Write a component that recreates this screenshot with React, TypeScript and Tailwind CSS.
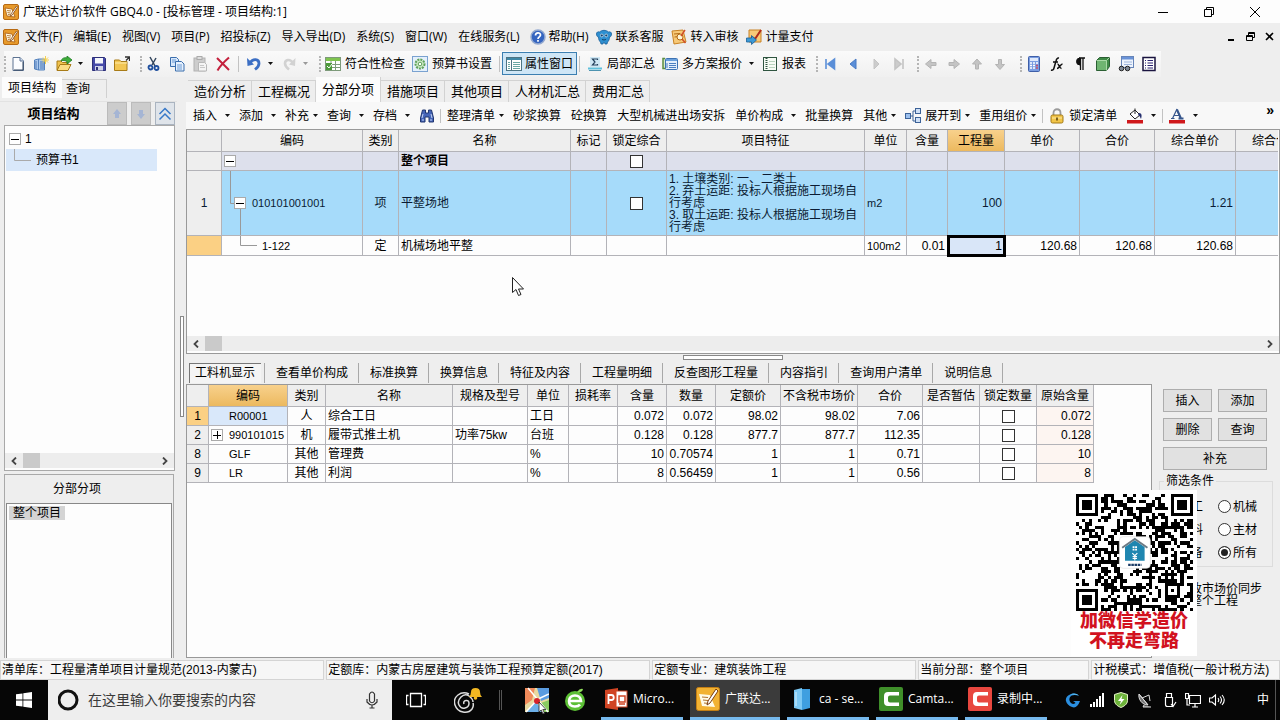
import type { ReactNode } from 'react';
import clsx from 'clsx';

const ICONS: Record<string, ReactNode> = {
  app: (
    <>
      <rect x="0.5" y="0.5" width="15" height="15" rx="1.5" fill="#e79a2b" stroke="#b86a12" />
      <path d="M2 4l7 1 3 8-8-1z" fill="#fff7e0" stroke="#a85b10" strokeWidth="0.8" />
      <path d="M4 6.5l4 .5M4.5 8.5l3 .5M5 10.5l3 .5" stroke="#b0722a" strokeWidth="0.9" />
      <path d="M13.5 2L8 10l-.6 2.2L9.200 11 14.500 3z" fill="#fff" stroke="#8a4a12" strokeWidth="0.8" />
    </>
  ),
  file: (
    <>
      <path d="M3 1.500h7l3.500 3.500v9.500H3z" fill="#fcfdff" stroke="#5d7392" />
      <path d="M10 1.500V5h3.500" fill="#cfdcf0" stroke="#5d7392" />
      <path d="M13 6v8H4" stroke="#34475f" fill="none" />
    </>
  ),
  files: (
    <>
      <path d="M1.500 4l4-1v11l-4-1zM5.500 3h6v11h-6z" fill="#a9c8ee" stroke="#5582bd" />
      <path d="M7 6h4M7 8h4M7 10h4M7 12h4M3 5v8" stroke="#4e79b5" />
      <path d="M12.500 0v8M8.500 4h8M10 1.500l5 5M15 1.500l-5 5" stroke="#f5d04c" />
    </>
  ),
  open: (
    <>
      <path d="M1 14V5h4l1.500 1.500H12V9" fill="#f0c24d" stroke="#a87b17" />
      <path d="M1 14.500l3-6h11l-3 6z" fill="#fbdd83" stroke="#a87b17" />
      <path d="M5 5c1-3 4-4 6-3V0l5 4-5 4V5.500C9 4.500 7 4 5 5z" fill="#3fae3a" stroke="#1c7a22" strokeWidth="0.8" />
    </>
  ),
  save: (
    <>
      <path d="M1.500 1.500h12l1 1v12h-13z" fill="#4549a8" stroke="#2c2f78" />
      <rect x="4" y="2" width="8" height="5.500" fill="#f4f6fb" />
      <rect x="4" y="10" width="8" height="4.500" fill="#cfd3e8" />
      <rect x="5" y="11" width="2" height="3" fill="#2c2f78" />
    </>
  ),
  folder: (
    <>
      <path d="M0.500 14.500V4h5l1.500 1.500h6v9z" fill="#f2c653" stroke="#a87b17" />
      <path d="M1 7h12" stroke="#fdecb0" />
      <path d="M11 1h4.500v4M15 1.500l-3 3" stroke="#333" fill="none" strokeWidth="1.300" />
    </>
  ),
  cut: (
    <>
      <path d="M4 1l5 9M10 2L6 9" stroke="#33465e" strokeWidth="1.500" />
      <circle cx="4.500" cy="11.500" r="2" fill="none" stroke="#1f4f9e" strokeWidth="1.800" />
      <circle cx="10.500" cy="12" r="2" fill="none" stroke="#1f4f9e" strokeWidth="1.800" />
    </>
  ),
  copy: (
    <>
      <path d="M1.500 1.500h6l2 2v7h-8z" fill="#d8e8fb" stroke="#3a6ead" />
      <path d="M6.500 5.500h6l2.500 2.500v7H6.500z" fill="#e7f1fd" stroke="#3a6ead" />
      <path d="M8 9h5M8 11h5M8 13h5M3 4h4M3 6h3" stroke="#6c9bd4" />
    </>
  ),
  paste: (
    <>
      <rect x="2" y="2" width="11" height="13" fill="#cdcdcd" stroke="#b2b2b2" />
      <rect x="5" y="0.500" width="5" height="3" fill="#ddd" stroke="#aaa" />
      <path d="M6.500 6.500h6l2 2v6.500h-8z" fill="#f4f4f4" stroke="#b8b8b8" />
      <path d="M8 9.500h4M8 11.500h5" stroke="#c8c8c8" />
    </>
  ),
  del: <path d="M2 2c3 3 8 8 12 12M14 1.500C10 5 5 10 2.500 14.500" stroke="#c4203c" strokeWidth="2" fill="none" />,
  undo: (
    <>
      <path d="M4 7c3-5 9-4 9 .5 0 3-2 4.500-4 6" fill="none" stroke="#3c6fc4" strokeWidth="2.800" />
      <path d="M1 2l.5 8L8 8.500z" fill="#3c6fc4" />
    </>
  ),
  redo: (
    <>
      <path d="M12 7C9 2.500 4 3.500 4 7.500c0 3 2 4.500 4 6" fill="none" stroke="#d2d2d2" strokeWidth="2.600" />
      <path d="M14.500 2L14 10 8 8.500z" fill="#d2d2d2" />
    </>
  ),
  check: (
    <>
      <rect x="0.500" y="1.500" width="15" height="13" fill="#fff" stroke="#7d9a7a" />
      <rect x="1" y="2" width="14" height="3" fill="#7fc44f" />
      <path d="M1 8.500h14M1 11.500h14M6 5v10M10.500 5v10" stroke="#7d9a7a" />
      <rect x="1" y="7" width="6" height="7" fill="#4d9a3a" />
      <path d="M2 10l2 2 3-4" stroke="#fff" fill="none" />
    </>
  ),
  gear: (
    <>
      <rect x="0.500" y="0.500" width="15" height="15" fill="#e4f0fb" stroke="#7aa2d0" />
      <circle cx="8" cy="8" r="4.500" fill="#cfe8c8" stroke="#5ea25a" strokeWidth="2" strokeDasharray="2 1" />
      <circle cx="8" cy="8" r="1.800" fill="#fff" stroke="#5ea25a" />
    </>
  ),
  props: (
    <>
      <rect x="0.500" y="1.500" width="15" height="13" fill="#fff" stroke="#4d7484" />
      <rect x="1" y="2" width="14" height="2" fill="#3f87a6" />
      <path d="M5.500 4v10" stroke="#4d7484" />
      <path d="M2 6.500h2M2 8.500h2M2 10.500h2M2 12.500h2M7 6.500h7M7 8.500h7M7 10.500h7M7 12.500h7" stroke="#69a7a4" />
    </>
  ),
  sum: (
    <>
      <rect x="3" y="1" width="10" height="10" fill="#cfe7f4" />
      <path d="M10.500 4V3H5.500L8 6 5.500 9h5V8" fill="none" stroke="#23405c" strokeWidth="1.200" />
      <path d="M1 12.500h14" stroke="#5fc0dc" strokeWidth="2" />
      <path d="M2 14.500h12" stroke="#4d93b0" />
    </>
  ),
  plans: (
    <>
      <path d="M3 2.500h-2v10h3" fill="#d8ebc9" stroke="#5b8c40" strokeWidth="1.500" />
      <rect x="3.500" y="2.500" width="12" height="11" rx="1" fill="#e3eefb" stroke="#3c72b3" />
      <rect x="4" y="3" width="11" height="2" fill="#69a0dc" />
      <path d="M7 7.500h7M7 9.500h7M7 11.500h7M5 7v5" stroke="#4b7fc0" />
    </>
  ),
  report: (
    <>
      <rect x="1.500" y="1.500" width="13" height="13" fill="#f6fbf4" stroke="#2f5540" />
      <path d="M4.500 2v12" stroke="#2f5540" strokeDasharray="1 1" strokeWidth="2" />
      <path d="M7 5.500h6M7 8.500h6M7 11.500h6" stroke="#b9d3bd" />
    </>
  ),
  first: <path d="M4 3v10M12.500 3v10L6 8z" fill="#5b8fd8" stroke="#5b8fd8" strokeWidth="1.600" />,
  prev: <path d="M11 3v10L5 8z" fill="#5b8fd8" stroke="#4a7bc4" />,
  next: <path d="M6 3v10l5-5z" fill="#cccccc" stroke="#c4c4c4" />,
  last: <path d="M12 3v10M4 3v10l6-5z" fill="#cccccc" stroke="#c4c4c4" strokeWidth="1.600" />,
  left: <path d="M2.500 8L8 3.500V6.500h5v3H8v3z" fill="#c4c4c4" stroke="#b4b4b4" />,
  right: <path d="M13.500 8L8 3.500V6.500H3v3h5v3z" fill="#c4c4c4" stroke="#b4b4b4" />,
  up: <path d="M8 3l4.500 5H9.500v5h-3V8h-3z" fill="#c4c4c4" stroke="#b4b4b4" />,
  down: <path d="M8 13.500L3.500 8.500h3v-5h3v5h3z" fill="#c4c4c4" stroke="#b4b4b4" />,
  calc: (
    <>
      <rect x="2.500" y="0.500" width="11" height="15" rx="1" fill="#7a9de0" stroke="#3f5fa8" />
      <rect x="4" y="2" width="8" height="3" fill="#dfe9fb" />
      <path d="M4 7h2M7 7h2M10 7h2M4 9.500h2M7 9.500h2M4 12h2M7 12h2" stroke="#fff" strokeWidth="1.400" />
      <path d="M10 9.500h2M10 12h2" stroke="#c8506a" strokeWidth="1.400" />
    </>
  ),
  fx: (
    <path
      d="M10 2c-2-.5-2.500 1-3 3L5 12c-.5 2-1.500 2.500-3 2M4 6h5M8.500 8c2 0 1.500 4.500 4 4.500M13.500 8c-2 0-3.500 4.500-5.500 4.500"
      fill="none"
      stroke="#111"
      strokeWidth="1.500"
    />
  ),
  para: (
    <>
      <path d="M8 2a3.500 3.500 0 000 7z" fill="#111" stroke="#111" />
      <path d="M8.500 2v12M11 2v12M7 2h6" stroke="#111" strokeWidth="1.300" />
    </>
  ),
  cube: (
    <>
      <path d="M1.500 4.500l3-3h10v9l-3 4h-10z" fill="#3f8a46" stroke="#2b5f33" />
      <rect x="2" y="5" width="9" height="9" fill="#6fb571" />
      <path d="M1.500 4.500h10l3-3M11.500 4.500v10" stroke="#a8d9a6" fill="none" />
    </>
  ),
  find: (
    <>
      <rect x="3.500" y="0.500" width="12" height="11" fill="#eef4fd" stroke="#6785b8" />
      <rect x="4" y="1" width="11" height="2.500" fill="#6a93d8" />
      <path d="M6 6h8M6 8.500h8" stroke="#9fb6dc" />
      <circle cx="3.500" cy="12.500" r="2.300" fill="#7d8795" stroke="#222" />
      <circle cx="9.500" cy="12.500" r="2.300" fill="#7d8795" stroke="#222" />
    </>
  ),
  list: (
    <>
      <rect x="2" y="1.500" width="12" height="13" fill="#fff" stroke="#1a1440" strokeWidth="1.500" />
      <path d="M4 4.500h1M4 7h1M4 9.500h1M4 12h1M6.500 4.500H12M6.500 7H12M6.500 9.500H12M6.500 12H12" stroke="#2a2270" strokeWidth="1.200" />
    </>
  ),
  help: (
    <>
      <circle cx="8" cy="8" r="7" fill="#3565c0" stroke="#94a9cf" strokeWidth="1.500" />
      <path d="M5.500 6.500c0-3.500 5-3.500 5-.5 0 2-2.500 1.800-2.500 4M8 11v1.800" stroke="#fff" strokeWidth="1.700" fill="none" />
    </>
  ),
  service: (
    <>
      <path
        d="M0.500 5c0-2 1.500-2.500 3-2C6 .800 10 .800 12.500 3c1.500-.5 3 0 3 2s-1 3-2 3c0 2.500-.8 4-2 5l-.5 2h-2l-.5-1.500h-1L7 15H5l-.5-2c-1.200-1-2-2.500-2-5-1 0-2-1-2-3z"
        fill="#2e8fd0"
        stroke="#1a5f9c"
        strokeWidth="0.800"
      />
      <circle cx="5.800" cy="6.500" r="1.400" fill="#0f3f6c" stroke="#fff" strokeWidth="0.600" />
      <circle cx="10.200" cy="6.500" r="1.400" fill="#0f3f6c" stroke="#fff" strokeWidth="0.600" />
      <path d="M6 10.500q2 1 4 0" stroke="#0f3f6c" />
    </>
  ),
  audit: (
    <>
      <path d="M1 2l11-1 3 12-12 2z" fill="#f7c978" stroke="#c98224" />
      <path d="M3 5l6-.5M3.500 8l3-.3" stroke="#b36a14" />
      <circle cx="9" cy="8" r="3" fill="#fff6d8" stroke="#b36a14" />
      <path d="M11 10l3.500 4M14 1l-4 6" stroke="#d0502a" strokeWidth="1.500" />
    </>
  ),
  pay: (
    <>
      <path d="M3 1h12v12H3z" fill="#f7c978" stroke="#c98224" />
      <path d="M5 8l4 2 6-9" stroke="#b02a1a" strokeWidth="2" fill="none" />
      <path d="M0.500 9h5V6.500l5 4.500-5 4.500V13h-5z" fill="#3d9ad6" stroke="#1b5f98" strokeWidth="0.800" />
    </>
  ),
  binoc: (
    <>
      <path d="M3.500 2h3v3h3V2h3l2 8v4h-4.500V9h-4v5H1.500v-4z" fill="#4565b8" stroke="#21366f" />
      <path d="M4 6l-1 4M12 6l1 4M3 12h2M11 12h2" stroke="#c4d4f6" />
    </>
  ),
  tree: (
    <>
      <path d="M4 8h4M8 3v10M8 3h3M8 13h3" stroke="#3c6298" fill="none" />
      <rect x="0.500" y="5.500" width="5" height="5" fill="#9cc0ee" stroke="#3c6298" />
      <rect x="10.500" y="0.500" width="5" height="5" fill="#cfe0f6" stroke="#3c6298" />
      <rect x="10.500" y="9.500" width="5" height="5" fill="#cfe0f6" stroke="#3c6298" />
    </>
  ),
  lock: (
    <>
      <path d="M4.500 8V5c0-5 7-5 7 0v3" fill="none" stroke="#9b9b9b" strokeWidth="1.800" />
      <rect x="2" y="7" width="12" height="8" rx="1.500" fill="#f2c548" stroke="#a37a18" />
      <path d="M3 10h10" stroke="#fce9a4" />
      <path d="M8 9.500v3" stroke="#5f4508" strokeWidth="1.600" />
    </>
  ),
  fill: (
    <>
      <path d="M3 6l5-4 5 5-5 4z" fill="#fff" stroke="#222" />
      <path d="M8 6V0.500" stroke="#222" />
      <path d="M12 5c3 0 3 3 2 6-1-2-1-3-3-4z" fill="#27306f" />
      <rect x="0" y="12" width="16" height="3.500" fill="#d0181c" />
    </>
  ),
  fontColor: (
    <>
      <path d="M3.500 10.500L8 1M7.500 1l4 9.500M5.500 7.500h5M2 10.500h3.500" stroke="#36568c" strokeWidth="1.200" fill="none" />
      <path d="M8 1.500l4 9M9.500 10.500h5" stroke="#36568c" strokeWidth="2" fill="none" />
      <rect x="0" y="12" width="16" height="3.500" fill="#d0181c" />
    </>
  ),
};

function Icon({ name, size = 'size-4' }: { name: string; size?: string }) {
  return (
    <svg viewBox="0 0 16 16" className={clsx(size, 'shrink-0')} fill="none">
      {ICONS[name]}
    </svg>
  );
}

function Caret({ gray = false }: { gray?: boolean }) {
  return (
    <svg viewBox="0 0 7 4" className="h-1 w-[7px] shrink-0">
      <path d="M1 0h5L3.500 3z" fill={gray ? '#999' : '#111'} />
    </svg>
  );
}

const Grip = () => <span className="-mr-[3px] h-4 w-0 shrink-0 border-l-2 border-dotted border-[#b5b5b5]" />;
const Divider = () => <span className="h-4 w-px shrink-0 bg-[#c2c2c2]" />;

function IconButton({ name, label, caret, gray }: { name: string; label: string; caret?: boolean; gray?: boolean }) {
  return (
    <button type="button" aria-label={label} className="flex shrink-0 items-center gap-[5px]">
      <Icon name={name} />
      {caret && <Caret gray={gray} />}
    </button>
  );
}

function TextButton({ icon, text, caret }: { icon: string; text: string; caret?: boolean }) {
  return (
    <button type="button" className="flex shrink-0 items-center gap-1 whitespace-nowrap">
      <Icon name={icon} />
      {text}
      {caret && (
        <span className="ml-0.5">
          <Caret />
        </span>
      )}
    </button>
  );
}

const MENUS = ['文件(F)', '编辑(E)', '视图(V)', '项目(P)', '招投标(Z)', '导入导出(D)', '系统(S)', '窗口(W)', '在线服务(L)'];

const MENU_LINKS = [
  { icon: 'help', text: '帮助(H)' },
  { icon: 'service', text: '联系客服' },
  { icon: 'audit', text: '转入审核' },
  { icon: 'pay', text: '计量支付' },
];

function TitleBar() {
  return (
    <header className="flex h-[23px] shrink-0 items-center bg-[#fdfdfd] pl-[3px] font-['Open_Sans','Noto_Sans_CJK_SC',sans-serif]">
      <Icon name="app" />
      <h1 className="ml-1 flex-1 text-xs whitespace-nowrap">广联达计价软件 GBQ4.0 - [投标管理 - 项目结构:1]</h1>
      <div className="flex items-center gap-9 pr-5">
        <button type="button" aria-label="最小化">
          <svg viewBox="0 0 10 10" className="size-2.5"><path d="M0 5.500h10" stroke="#000" /></svg>
        </button>
        <button type="button" aria-label="还原">
          <svg viewBox="0 0 10 10" className="size-2.5" fill="none" stroke="#000">
            <path d="M0.500 2.500h7v7h-7zM2.500 2.500v-2h7v7h-2" />
          </svg>
        </button>
        <button type="button" aria-label="关闭">
          <svg viewBox="0 0 10 10" className="size-2.5"><path d="M0 0l10 10M10 0L0 10" stroke="#000" /></svg>
        </button>
      </div>
    </header>
  );
}

function MenuBar() {
  return (
    <nav className="flex h-[27px] shrink-0 items-center pl-[3px] font-['Open_Sans','Noto_Sans_CJK_SC',sans-serif] text-xs whitespace-nowrap">
      <Icon name="app" />
      <div className="ml-1.5 flex items-center gap-[11px]">
        {MENUS.map((m) => (
          <button key={m} type="button">{m}</button>
        ))}
      </div>
      <div className="ml-2.5 flex flex-1 items-center gap-2">
        {MENU_LINKS.map((m) => (
          <button key={m.text} type="button" className="flex items-center gap-[3px]">
            <Icon name={m.icon} />
            {m.text}
          </button>
        ))}
      </div>
      <div className="flex items-center gap-2.5 pr-1.5">
        <button type="button" aria-label="最小化子窗口">
          <svg viewBox="0 0 9 9" className="size-[9px]"><path d="M1 8h6" stroke="#000" strokeWidth="2" /></svg>
        </button>
        <button type="button" aria-label="还原子窗口">
          <svg viewBox="0 0 9 9" className="size-[9px]" fill="none" stroke="#000">
            <path d="M0.500 3.500h6v5h-6zM0.500 4.500h6M2.500 3V.500h6v5h-2M2.500 1.500h6" />
          </svg>
        </button>
        <button type="button" aria-label="关闭子窗口">
          <svg viewBox="0 0 9 9" className="size-[9px]"><path d="M1 1l7 7M8 1L1 8" stroke="#000" strokeWidth="1.600" /></svg>
        </button>
      </div>
    </nav>
  );
}

function MainToolbar() {
  const group = 'flex h-[26px] shrink-0 items-center gap-[7px] bg-linear-to-b from-[#fafafa] to-[#f0f0f0]';
  return (
    <div className="flex h-[27px] shrink-0 items-center pl-1 text-xs">
      <div className={clsx(group, 'pr-2.5')}>
        <Grip />
        <IconButton name="file" label="新建" />
        <IconButton name="files" label="新建项目" />
        <IconButton name="open" label="打开" caret />
        <IconButton name="save" label="保存" />
        <IconButton name="folder" label="目录" />
      </div>
      <div className={clsx(group, 'pr-2.5')}>
        <Grip />
        <IconButton name="cut" label="剪切" />
        <IconButton name="copy" label="复制" />
        <IconButton name="paste" label="粘贴" />
        <IconButton name="del" label="删除" />
        <Divider />
        <IconButton name="undo" label="撤消" caret />
        <IconButton name="redo" label="恢复" caret gray />
      </div>
      <div className={clsx(group, 'pr-2.5')}>
        <Grip />
        <TextButton icon="check" text="符合性检查" />
        <TextButton icon="gear" text="预算书设置" />
        <div className="flex items-center gap-0.5">
          <Divider />
          <button type="button" className="flex h-[23px] items-center gap-[3px] border border-[#3c7fb1] bg-[#cfe6f6] px-[3px] whitespace-nowrap">
            <Icon name="props" />
            属性窗口
          </button>
          <Divider />
        </div>
        <TextButton icon="sum" text="局部汇总" />
        <TextButton icon="plans" text="多方案报价" caret />
        <TextButton icon="report" text="报表" />
      </div>
      <div className={clsx(group, 'pr-2.5')}>
        <Grip />
        <IconButton name="first" label="首条" />
        <IconButton name="prev" label="上一条" />
        <IconButton name="next" label="下一条" />
        <IconButton name="last" label="末条" />
      </div>
      <div className={clsx(group, 'pr-3')}>
        <Grip />
        <IconButton name="left" label="升级" />
        <IconButton name="right" label="降级" />
        <IconButton name="up" label="上移" />
        <IconButton name="down" label="下移" />
      </div>
      <div className={clsx(group, 'pr-1')}>
        <Grip />
        <IconButton name="calc" label="计算器" />
        <IconButton name="fx" label="函数" />
        <IconButton name="para" label="段落" />
        <IconButton name="cube" label="图元" />
        <IconButton name="find" label="查找" />
        <IconButton name="list" label="清单" />
      </div>
    </div>
  );
}

function Expander({ open }: { open: boolean }) {
  return (
    <button type="button" aria-label={open ? '折叠' : '展开'} className="size-3 shrink-0 border border-[#aaa] bg-white">
      <svg viewBox="0 0 10 10" className="size-2.5">
        <path d={open ? 'M1 5.500h8' : 'M1 5.500h8M5.500 1v8'} stroke="#000" />
      </svg>
    </button>
  );
}

function ScrollX() {
  return (
    <div className="flex h-[15px] shrink-0 items-center bg-[#ededed] px-1.5">
      <svg viewBox="0 0 6 8" className="h-2 w-1.5"><path d="M5 0.500L1.500 4 5 7.500" fill="none" stroke="#444" strokeWidth="1.800" /></svg>
      <div className="ml-[6px] h-[15px] w-[17px] bg-[#cacaca]" />
      <svg viewBox="0 0 6 8" className="ml-auto h-2 w-1.5"><path d="M1 0.500L4.500 4 1 7.500" fill="none" stroke="#444" strokeWidth="1.800" /></svg>
    </div>
  );
}

function Sidebar() {
  const small = 'flex h-[23px] w-5 items-center justify-center border';
  return (
    <aside className="flex w-[177px] shrink-0 flex-col">
      <div className="flex h-[25px] shrink-0 items-start border-b border-[#e2e2e2] pl-0.5">
        <button type="button" className="h-[21px] bg-[#fcfcfc] px-1.5 text-xs">项目结构</button>
        <button type="button" className="mt-0.5 h-[19px] border-t border-r border-[#d0d0d0] pr-4 pl-1 text-xs">查询</button>
      </div>
      <div className="flex h-[23px] shrink-0 items-center gap-1 pr-0.5 pl-1">
        <h2 className="flex-1 text-center text-[13px] font-bold">项目结构</h2>
        <button type="button" aria-label="上移" className={clsx(small, 'border-[#bbb] bg-[#ccc]')}>
          <svg viewBox="0 0 12 12" className="size-3"><path d="M6 1l4 5H8v4H4V6H2z" fill="#a5b5d4" /></svg>
        </button>
        <button type="button" aria-label="下移" className={clsx(small, 'border-[#bbb] bg-[#ccc]')}>
          <svg viewBox="0 0 12 12" className="size-3"><path d="M6 11L2 6h2V2h4v4h2z" fill="#a5b5d4" /></svg>
        </button>
        <button type="button" aria-label="收起" className={clsx(small, 'border-[#aab4c0] bg-[#dfe4ea]')}>
          <svg viewBox="0 0 14 14" className="size-3.5" fill="none" stroke="#3778c8" strokeWidth="1.500">
            <path d="M1.500 7L7 1.500 12.500 7M1.500 12.500L7 7l5.500 5.500" />
          </svg>
        </button>
      </div>
      <div className="mr-0.5 ml-1 flex min-h-0 flex-1 flex-col border border-[#a9a9a9] bg-[#fdfdfd]">
        <div className="flex-1 pt-[3px] pl-px text-xs">
          <div className="flex h-5 items-center gap-1 pl-[3px]">
            <Expander open />
            <span>1</span>
          </div>
          <div className="mr-[17px] flex h-[22px] items-center bg-[#d9e8fa]">
            <svg viewBox="0 0 30 22" className="h-[22px] w-[30px]"><path d="M8.500 0v11.500H25" fill="none" stroke="#aaa" /></svg>
            <span>预算书1</span>
          </div>
        </div>
        <ScrollX />
        <div className="h-0.5" />
      </div>
      <div className="mt-[3px] mr-[3px] ml-1 flex h-[184px] shrink-0 flex-col border-x border-t border-[#a9a9a9]">
        <h2 className="flex h-7 shrink-0 items-center pl-12 text-xs">分部分项</h2>
        <div className="mx-px flex flex-1 items-start border-x border-t border-[#888] bg-[#fdfdfd] p-0.5">
          <span className="bg-[#d4d4d4] px-1 text-xs leading-[14px]">整个项目</span>
        </div>
      </div>
    </aside>
  );
}

const TABS = ['造价分析', '工程概况', '分部分项', '措施项目', '其他项目', '人材机汇总', '费用汇总'];

function ViewTabs() {
  return (
    <div className="flex h-[25px] shrink-0 items-end pl-0.5 text-[13px] whitespace-nowrap">
      {TABS.map((t) => (
        <button
          key={t}
          type="button"
          className={clsx(
            'border-r border-[#d2d2d2]',
            t === '分部分项' ? 'h-[25px] bg-[#fcfcfc] px-1.5' : 'h-[22px] border-t pr-[5px] pl-1.5',
          )}
        >
          {t}
        </button>
      ))}
    </div>
  );
}

type Action = { text?: string; icon?: string; caret?: 'near' | 'far'; divider?: boolean };

const ACTIONS: Action[] = [
  { text: '插入', caret: 'far' },
  { text: '添加', caret: 'far' },
  { text: '补充', caret: 'near' },
  { text: '查询', caret: 'far' },
  { text: '存档', caret: 'far' },
  { icon: 'binoc' },
  { divider: true },
  { text: '整理清单', caret: 'near' },
  { text: '砂浆换算' },
  { text: '砼换算' },
  { text: '大型机械进出场安拆' },
  { text: '单价构成', caret: 'far' },
  { text: '批量换算' },
  { text: '其他', caret: 'near' },
  { icon: 'tree', text: '展开到', caret: 'near' },
  { text: '重用组价', caret: 'near' },
  { divider: true },
  { icon: 'lock', text: '锁定清单' },
  { icon: 'fill', caret: 'far' },
  { divider: true },
  { icon: 'fontColor', caret: 'far' },
];

function ActionBar() {
  return (
    <div className="flex h-[27px] shrink-0 items-center bg-[#f8f8f8] pl-[7px] text-xs whitespace-nowrap">
      {ACTIONS.map((a, i) =>
        a.divider ? (
          <span key={i} className="mr-1.5 -ml-[3px] h-3.5 w-px shrink-0 bg-[#c2c2c2]" />
        ) : (
          <button
            key={i}
            type="button"
            aria-label={a.text ?? a.icon}
            className={clsx('flex shrink-0 items-center', a.caret || !a.text ? 'mr-2' : 'mr-2.5')}
          >
            {a.icon && <Icon name={a.icon} />}
            {a.text && <span className={clsx(a.icon && 'ml-1')}>{a.text}</span>}
            {a.caret && (
              <span className={a.caret === 'far' ? 'ml-[7px]' : 'ml-[3px]'}>
                <Caret />
              </span>
            )}
          </button>
        ),
      )}
      <button type="button" aria-label="更多" className="mr-1.5 ml-auto self-start text-sm leading-4 font-bold">»</button>
    </div>
  );
}

type Column = { label: string; width: string; align?: string };

const BILL_COLUMNS: Column[] = [
  { label: '', width: 'w-[35px]' },
  { label: '编码', width: 'w-[141px]' },
  { label: '类别', width: 'w-[36px]' },
  { label: '名称', width: 'w-[172px]' },
  { label: '标记', width: 'w-[36px]' },
  { label: '锁定综合', width: 'w-[60px]' },
  { label: '项目特征', width: 'w-[198px]' },
  { label: '单位', width: 'w-[42px]' },
  { label: '含量', width: 'w-[41px]' },
  { label: '工程量', width: 'w-[57px]' },
  { label: '单价', width: 'w-[75px]' },
  { label: '合价', width: 'w-[75px]' },
  { label: '综合单价', width: 'w-[81px]' },
  { label: '综合合价', width: 'w-[81px]' },
];

const cell = 'border-r border-b border-[#b3b3b8] px-0.5';
const box = 'block mx-auto size-[13px] appearance-none border border-[#333] bg-white checked:bg-[#333]';

function HeaderRow({ columns, active }: { columns: Column[]; active: string }) {
  return (
    <thead>
      <tr className="h-[22px]">
        {columns.map((c, i) => (
          <th
            key={i}
            scope="col"
            className={clsx(
              'overflow-hidden border-r border-b border-[#b3b3b8] p-0 font-normal whitespace-nowrap',
              c.label === active ? 'bg-linear-to-b from-[#f8d18c] to-[#ecb95e]' : 'bg-[#eeeeee]',
            )}
          >
            {c.label}
          </th>
        ))}
      </tr>
    </thead>
  );
}

function Columns({ columns }: { columns: Column[] }) {
  return (
    <colgroup>
      {columns.map((c, i) => (
        <col key={i} className={c.width} />
      ))}
    </colgroup>
  );
}

function BillTable() {
  return (
    <div className="relative flex h-[225px] shrink-0 flex-col overflow-hidden border border-[#999] bg-[#fdfdfd]">
      <div className="mr-px flex-1 overflow-hidden">
        <table className="w-px table-fixed border-separate border-spacing-0 text-xs leading-3">
          <Columns columns={BILL_COLUMNS} />
          <HeaderRow columns={BILL_COLUMNS} active="工程量" />
          <tbody>
            <tr className="h-[19px] bg-[#dde0ec] font-bold">
              <td className={clsx(cell, 'bg-[#eeeeee]')} />
              <td className={cell}><div className="flex"><Expander open /></div></td>
              <td className={cell} />
              <td className={cell}>整个项目</td>
              <td className={cell} />
              <td className={cell}><input type="checkbox" aria-label="锁定整个项目" className={box} /></td>
              {BILL_COLUMNS.slice(6).map((c) => <td key={c.label} className={cell} />)}
            </tr>
            <tr className="h-[65px] bg-[#a6dbfa] text-[#0b1b33]">
              <td className={clsx(cell, 'bg-[#eeeeee] text-center')}>1</td>
              <td className="border-r border-b border-[#b3b3b8] p-0">
                <div className="flex h-16 items-center">
                  <svg viewBox="0 0 12 64" className="h-16 w-3"><path d="M8.500 0v32.500H12" fill="none" stroke="#999" /></svg>
                  <span className="flex h-full flex-col items-center">
                    <span className="flex-1" />
                    <Expander open />
                    <span className="w-px flex-1 bg-[#999]" />
                  </span>
                  <span className="ml-1.5 text-[11px]">010101001001</span>
                </div>
              </td>
              <td className={clsx(cell, 'text-center')}>项</td>
              <td className={cell}>平整场地</td>
              <td className={cell} />
              <td className={cell}><input type="checkbox" aria-label="锁定平整场地" className={box} /></td>
              <td className={cell}>
                1. 土壤类别: 一、二类土<br />
                2. 弃土运距: 投标人根据施工现场自行考虑<br />
                3. 取土运距: 投标人根据施工现场自行考虑
              </td>
              <td className={clsx(cell, 'text-[11px]')}>m2</td>
              <td className={cell} />
              <td className={clsx(cell, 'text-right')}>100</td>
              <td className={cell} />
              <td className={cell} />
              <td className={clsx(cell, 'text-right')}>1.21</td>
              <td className={cell} />
            </tr>
            <tr className="h-5">
              <td className={clsx(cell, 'bg-[#fbd084]')} />
              <td className="border-r border-b border-[#b3b3b8] p-0">
                <div className="flex h-[19px] items-center">
                  <svg viewBox="0 0 36 19" className="h-[19px] w-9"><path d="M18.500 0v9.500H35" fill="none" stroke="#999" /></svg>
                  <span className="ml-1 text-[11px]">1-122</span>
                </div>
              </td>
              <td className={clsx(cell, 'text-center')}>定</td>
              <td className={cell}>机械场地平整</td>
              <td className={cell} />
              <td className={cell} />
              <td className={cell} />
              <td className={clsx(cell, 'text-[11px]')}>100m2</td>
              <td className={clsx(cell, 'text-right')}>0.01</td>
              <td className={clsx(cell, 'bg-[#d9e6f8] text-right outline-[3px] -outline-offset-2 outline-black')}>1</td>
              <td className={clsx(cell, 'text-right')}>120.68</td>
              <td className={clsx(cell, 'text-right')}>120.68</td>
              <td className={clsx(cell, 'text-right')}>120.68</td>
              <td className={cell} />
            </tr>
          </tbody>
        </table>
      </div>
      <ScrollX />
      <div className="h-0.5 shrink-0" />
      <svg viewBox="0 0 12 19" className="absolute top-[147px] left-[325px] h-[19px] w-3">
        <path d="M0.500 0.500v15l3.500-3 2.500 6 2.500-1-2.500-5.500h5z" fill="#fff" stroke="#222" />
      </svg>
    </div>
  );
}

const DETAIL_TABS = ['工料机显示', '查看单价构成', '标准换算', '换算信息', '特征及内容', '工程量明细', '反查图形工程量', '内容指引', '查询用户清单', '说明信息'];

const DETAIL_COLUMNS: Column[] = [
  { label: '', width: 'w-[22px]', align: 'text-center' },
  { label: '编码', width: 'w-[79px]' },
  { label: '类别', width: 'w-[38px]', align: 'text-center' },
  { label: '名称', width: 'w-[127px]' },
  { label: '规格及型号', width: 'w-[75px]' },
  { label: '单位', width: 'w-[41px]' },
  { label: '损耗率', width: 'w-[49px]' },
  { label: '含量', width: 'w-[49px]', align: 'text-right' },
  { label: '数量', width: 'w-[49px]', align: 'text-right' },
  { label: '定额价', width: 'w-[65px]', align: 'text-right' },
  { label: '不含税市场价', width: 'w-[77px]', align: 'text-right' },
  { label: '合价', width: 'w-[65px]', align: 'text-right' },
  { label: '是否暂估', width: 'w-[57px]' },
  { label: '锁定数量', width: 'w-[57px]' },
  { label: '原始含量', width: 'w-[57px]', align: 'text-right' },
];

const DETAIL_ROWS = [
  ['1', 'R00001', '人', '综合工日', '', '工日', '', '0.072', '0.072', '98.02', '98.02', '7.06', '', 'box', '0.072'],
  ['2', '990101015', '机', '履带式推土机', '功率75kw', '台班', '', '0.128', '0.128', '877.7', '877.7', '112.35', '', 'box', '0.128'],
  ['8', 'GLF', '其他', '管理费', '', '%', '', '10', '0.70574', '1', '1', '0.71', '', 'box', '10'],
  ['9', 'LR', '其他', '利润', '', '%', '', '8', '0.56459', '1', '1', '0.56', '', 'box', '8'],
];

function DetailTable() {
  return (
    <table className="w-px table-fixed border-separate border-spacing-0 text-xs leading-3 whitespace-nowrap">
      <Columns columns={DETAIL_COLUMNS} />
      <HeaderRow columns={DETAIL_COLUMNS} active="编码" />
      <tbody>
        {DETAIL_ROWS.map((row, r) => (
          <tr key={row[0]} className="h-[19px]">
            {row.map((value, c) => (
              <td
                key={c}
                className={clsx(
                  cell,
                  DETAIL_COLUMNS[c].align,
                  c === 0 && (r === 0 ? 'bg-[#fbd084]' : 'bg-[#eeeeee]'),
                  c === 1 && r === 0 && 'bg-[#d9e8fa]',
                  c === 14 && 'bg-[#fdf5f1]',
                )}
              >
                {c === 1 ? (
                  <div className="flex items-center text-[11px]">
                    <span className="mr-1.5 flex w-3">{r === 1 && <Expander open={false} />}</span>
                    {value}
                  </div>
                ) : value === 'box' ? (
                  <input type="checkbox" aria-label={`锁定数量 ${row[3]}`} className={box} />
                ) : (
                  value
                )}
              </td>
            ))}
          </tr>
        ))}
      </tbody>
    </table>
  );
}

const FILTERS = ['人工', '机械', '材料', '主材', '设备', '所有'];

function DetailActions() {
  const btn = 'h-[23px] border border-[#adadad] bg-[#e1e1e1]';
  return (
    <div className="w-[121px] shrink-0 pt-[5px] pr-[7px] text-xs">
      <div className="grid grid-cols-2 gap-x-1.5 gap-y-1.5 pr-1.5 pl-1">
        <button type="button" className={btn}>插入</button>
        <button type="button" className={btn}>添加</button>
        <button type="button" className={btn}>删除</button>
        <button type="button" className={btn}>查询</button>
        <button type="button" className={clsx(btn, 'col-span-2')}>补充</button>
      </div>
      <fieldset className="mt-[3px] border border-[#dcdcdc] pb-1.5 pl-1">
        <legend className="px-0.5 leading-4">筛选条件</legend>
        <div className="grid grid-cols-2 gap-y-2 pt-2.5">
          {FILTERS.map((f) => (
            <label key={f} className="flex h-[15px] items-center gap-0.5 whitespace-nowrap">
              <input
                type="radio"
                name="filter"
                defaultChecked={f === '所有'}
                className="size-[13px] shrink-0 appearance-none rounded-full border border-[#333] bg-white checked:bg-[#222] checked:shadow-[inset_0_0_0_2px_white]"
              />
              {f}
            </label>
          ))}
        </div>
      </fieldset>
      <label className="mt-4 flex items-start gap-1 pl-0.5 leading-3 whitespace-nowrap">
        <input type="checkbox" className="size-[13px] shrink-0 appearance-none border border-[#333] bg-white" />
        <span>修改市场价同步<br />到整个工程</span>
      </label>
    </div>
  );
}

const QR_SIZE = 37;
const FINDERS = [[0, 0], [QR_SIZE - 7, 0], [0, QR_SIZE - 7]];

function buildQr() {
  let seed = 20174;
  let d = '';
  for (let y = 0; y < QR_SIZE; y++) {
    for (let x = 0; x < QR_SIZE; x++) {
      seed ^= seed << 13;
      seed ^= seed >>> 17;
      seed ^= seed << 5;
      const finder = FINDERS.some(([fx, fy]) => x >= fx - 1 && x <= fx + 7 && y >= fy - 1 && y <= fy + 7);
      const align = Math.max(Math.abs(x - 30), Math.abs(y - 30));
      const on = align <= 2 ? align !== 1 : (seed >>> 8) % 100 < 51;
      if (!finder && on) d += `M${x} ${y}h1v1h-1z`;
    }
  }
  return d;
}

function QrCard() {
  return (
    <div className="absolute right-[83px] bottom-0.5 flex w-[126px] flex-col items-center bg-white pt-1 pb-[5px] font-black text-[#d2121f]">
      <svg viewBox="0 0 37 37" className="size-[117px]">
        <g shapeRendering="crispEdges">
          <path d={buildQr()} fill="#000" />
          {FINDERS.map(([x, y]) => (
            <g key={`${x}-${y}`}>
              <rect x={x + 0.5} y={y + 0.5} width="6" height="6" fill="#fff" stroke="#000" />
              <rect x={x + 2} y={y + 2} width="3" height="3" fill="#000" />
            </g>
          ))}
        </g>
        <rect x="13.700" y="13.500" width="9.800" height="10" rx="1.200" fill="#fff" stroke="#ddd" strokeWidth="0.200" />
        <path d="M15.500 16.800l3.100-2.200 3.100 2.200v4.300h-6.200z" fill="#1f86b0" />
        <path d="M14.600 17l4-2.800 4 2.800" fill="none" stroke="#6c7a84" strokeWidth="0.600" />
        <path d="M17.900 16.500h.6v.6h-.6zM18.700 16.500h.6v.6h-.6zM17.900 17.300h.6v.6h-.6zM18.700 17.300h.6v.6h-.6z" fill="#fff" />
        <path d="M17.800 18.700l.8.800.8-.8M18.600 19.500v1.500M17.900 19.800h1.400M17.900 20.400h1.400" fill="none" stroke="#fff" strokeWidth="0.350" />
        <path d="M16.500 22.400h4.200" stroke="#1b3c66" strokeWidth="0.700" strokeDasharray="0.800 0.200" />
      </svg>
      <p className="text-lg leading-5">加微信学造价</p>
      <p className="text-lg leading-5">不再走弯路</p>
    </div>
  );
}

function DetailPane() {
  return (
    <section className="relative flex min-h-0 flex-1 flex-col">
      <div className="flex h-[23px] shrink-0 items-center pl-[3px] text-xs whitespace-nowrap">
        {DETAIL_TABS.map((t, i) =>
          i === 0 ? (
            <span key={t} className="flex h-5 items-center border-r border-[#a8a8a8] pr-[3px]">
              <button type="button" className="h-5 border-t border-l border-[#777] bg-[#f4f4f4] pr-1.5 pl-[5px]">{t}</button>
            </span>
          ) : (
            <button key={t} type="button" className="h-5 border-r border-[#a8a8a8] pr-2.5 pl-[11px]">{t}</button>
          ),
        )}
      </div>
      <div className="flex min-h-0 flex-1 gap-[7px]">
        <div className="flex-1 overflow-hidden border border-[#999] bg-[#fdfdfd]">
          <DetailTable />
        </div>
        <DetailActions />
      </div>
      <QrCard />
    </section>
  );
}

function StatusBar() {
  const seg = 'flex items-center border border-[#d4d4d4] bg-[#f6f6f6] pl-px whitespace-nowrap';
  return (
    <footer className="flex h-[22px] shrink-0 gap-0.5 pt-0.5 text-xs">
      <span className={clsx(seg, 'flex-[325]')}>清单库：工程量清单项目计量规范(2013-内蒙古)</span>
      <span className={clsx(seg, 'flex-[325]')}>定额库：内蒙古房屋建筑与装饰工程预算定额(2017)</span>
      <span className={clsx(seg, 'flex-[264]')}>定额专业：建筑装饰工程</span>
      <span className={clsx(seg, 'flex-[170]')}>当前分部：整个项目</span>
      <span className={clsx(seg, 'flex-[188]')}>计税模式：增值税(一般计税方法)</span>
    </footer>
  );
}

const APPS: { text: string; active?: boolean; icon: ReactNode }[] = [
  {
    text: 'Micro...',
    icon: (
      <>
        <path d="M1 3l13-2v22L1 21z" fill="#d04423" />
        <rect x="12" y="4" width="11" height="16" fill="#fff" stroke="#d04423" />
        <path d="M4.500 17V8h3c3 0 3 5 0 5h-3" fill="none" stroke="#fff" strokeWidth="1.800" />
        <path d="M15 9h6v6h-6zM15 17h6" fill="none" stroke="#d04423" strokeWidth="1.500" />
      </>
    ),
  },
  {
    text: '广联达...',
    active: true,
    icon: (
      <>
        <rect x="0.500" y="0.500" width="23" height="23" rx="2" fill="#f2b233" stroke="#c47f14" />
        <path d="M3 7l11 1 5 12-13-1z" fill="#fffbe8" />
        <path d="M6 10l6 .5M7 13l5 .5M8 16l5 .5" stroke="#b0722a" />
        <path d="M20 2l-8 12-1 4 3-2 8-12z" fill="#fff" stroke="#7a3d10" />
      </>
    ),
  },
  {
    text: 'ca - se...',
    icon: (
      <>
        <path d="M4 3l8-2v22l-8-2z" fill="#7cc8f4" />
        <path d="M12 2h8v19l-8 2z" fill="#3f9fe0" />
        <path d="M6 5v14" stroke="#d5effc" />
      </>
    ),
  },
  {
    text: 'Camta...',
    icon: (
      <>
        <rect x="0" y="0" width="24" height="24" rx="2" fill="#3f8f2a" />
        <path d="M20 5H9Q5 5 5 9v6q0 4 4 4h11v-3.500H11q-2 0-2-2v-3q0-2 2-2h9z" fill="#fff" />
      </>
    ),
  },
  {
    text: '录制中...',
    icon: (
      <>
        <rect x="0" y="0" width="24" height="24" rx="2" fill="#e8473f" />
        <path d="M20 5H9Q5 5 5 9v6q0 4 4 4h11v-3.500H11q-2 0-2-2v-3q0-2 2-2h9z" fill="#fff" />
      </>
    ),
  },
];

const TRAY: { label: string; icon: ReactNode }[] = [
  {
    label: '广联达',
    icon: (
      <>
        <path d="M14 3.500Q10 0 5 2.500T1 9t6 6 8-6H8q2 1 2.500 2-3 2-5-.5T5 5t9-1.500z" fill="#2b8fe0" />
        <path d="M14 3.500Q10 0 5 2.500q4-.5 9 1z" fill="#5cc0f4" />
      </>
    ),
  },
  { label: '信号', icon: <path d="M2 15v-3M5 15v-5M8 15V7M11 15V4M14 15V1" stroke="#fff" strokeWidth="2" /> },
  {
    label: '安全卫士',
    icon: (
      <>
        <path d="M8 0.500l6.500 2v6c0 4-4 6-6.500 7-2.500-1-6.500-3-6.500-7v-6z" fill="#6db33a" stroke="#e5f2c8" />
        <path d="M9.500 3L5 9h3l-1.500 4L11.500 7H8.500z" fill="#fff" />
      </>
    ),
  },
  {
    label: '接收器',
    icon: (
      <path d="M2 2c-1 5 3 11 9 11zM2 2l9 11M5 6l7-3M12 3l1 6M7 13l-1 2h8" fill="#777" stroke="#ddd" />
    ),
  },
  {
    label: 'USB',
    icon: <path d="M5.500 1.500h5v4h-5zM4.500 5.500h7v9h-5q-2 0-2-2zM10 12l2 2.500L15 10" fill="none" stroke="#fff" strokeWidth="1.200" />,
  },
  {
    label: '网络',
    icon: <path d="M4.500 3.500h11v8h-11zM10 12v3M7 15h6M0.500 1.500h3v5h-3zM2 7v6h3" fill="none" stroke="#fff" strokeWidth="1.200" />,
  },
  {
    label: '音量',
    icon: <path d="M0.500 6h2.500l3.500-3v10L3 10H.500zM9 6q1.500 2 0 4M11 4.500q3 3.500 0 7M13 3q4.500 5 0 10" fill="none" stroke="#fff" strokeWidth="1.100" />,
  },
];

function Taskbar() {
  return (
    <footer className="flex h-10 shrink-0 bg-[#060606] font-['Open_Sans','Noto_Sans_CJK_SC',sans-serif] text-white">
      <button type="button" aria-label="开始" className="flex w-12 items-center justify-center">
        <svg viewBox="0 0 16 16" className="size-4" fill="#fff">
          <path d="M0 2.300l6.500-.9v6.200H0zM7.300 1.300L16 0v7.600H7.300zM0 8.400h6.500v6.200L0 13.700zM7.300 8.400H16V16l-8.700-1.300z" />
        </svg>
      </button>
      <label className="flex w-[344px] items-center bg-[#eeeeee] px-2.5 text-[#222]">
        <svg viewBox="0 0 22 22" className="size-[22px]"><circle cx="10" cy="11" r="9" fill="none" stroke="#111" strokeWidth="3" /></svg>
        <input
          type="text"
          aria-label="搜索"
          placeholder="在这里输入你要搜索的内容"
          className="ml-2 min-w-0 flex-1 bg-transparent text-sm placeholder:text-[#3a3a3a] focus:outline-none"
        />
        <svg viewBox="0 0 12 18" className="mr-1 h-[18px] w-3" fill="none" stroke="#333" strokeWidth="1.200">
          <path d="M3.500 3q2.500-4 5 0v7q-2.500 3.500-5 0zM1 8v3q5 6 10 0V8M6 14v3M3.500 17h5" />
        </svg>
      </label>
      <div className="flex items-center pl-[14px]">
        <button type="button" aria-label="任务视图">
          <svg viewBox="0 0 20 16" className="h-4 w-5" fill="none" stroke="#fff" strokeWidth="1.300">
            <path d="M4.500 1.500h11v13h-11zM2.500 3.500h-2v9h2M17.500 3.500h2v9h-2" />
          </svg>
        </button>
        <button type="button" aria-label="通知助手" className="ml-7">
          <svg viewBox="0 0 28 28" className="size-7" fill="none">
            <path
              d="M15 8Q9 5 4 9T1 19t8 7 9-3q2-3 1-6M10 18q-1-3 2-3.500t3 3-4 4.500-6-3 2-8 8-1 4 6"
              stroke="#ddd"
              strokeWidth="1.500"
            />
            <path d="M15 11q2-2 2-5 0-4 4.500-4T26 6q0 3 2 5z" fill="#f2b822" />
            <circle cx="21.500" cy="12" r="1.800" fill="#f2b822" />
          </svg>
        </button>
        <span className="ml-[17px] h-5 w-[3px] border-x border-[#555]" />
        <button type="button" aria-label="地图" className="ml-[23px]">
          <svg viewBox="0 0 24 28" className="h-7 w-6">
            <rect x="0" y="2" width="24" height="24" fill="#e9d9a0" />
            <path d="M0 2h10l-3 12-7 5z" fill="#f08a5a" />
            <path d="M12 2h12v10l-8 3z" fill="#5a9ce0" />
            <path d="M2 26l9-11 6 11z" fill="#6db0e8" />
            <path d="M24 14v12h-5l-3-9z" fill="#8acb62" />
            <path d="M3 2l20 24M11 14L24 8M12 14L1 26" stroke="#fff" strokeWidth="1.500" />
            <circle cx="12" cy="15" r="3" fill="#d5232b" />
            <path d="M14 16v10l2.200-2 1.700 4 1.600-.7-1.700-3.800h3.200z" fill="#fff" stroke="#222" strokeWidth="0.800" />
          </svg>
        </button>
        <button type="button" aria-label="浏览器" className="ml-[14px]">
          <svg viewBox="0 0 24 24" className="size-6" fill="none">
            <circle cx="12" cy="13" r="10" fill="#5cbf35" />
            <path d="M14 4q3-4 6-3-1 4-6 3z" fill="#8fdc5a" />
            <path d="M6 13h12q-.5-5.500-6-5.500T6 13q0 5.500 6 5.500 3.500 0 5-2" stroke="#fff" strokeWidth="2.600" />
          </svg>
        </button>
      </div>
      <div className="flex flex-1 gap-[7px] pl-3.5 text-xs">
        {APPS.map((a) => (
          <button
            key={a.text}
            type="button"
            className={clsx(
              'flex h-10 items-center gap-[5px] border-b-[3px] border-[#76b9ed] whitespace-nowrap',
              a.active ? 'w-[90px] bg-[#3b3b3b] pl-1.5' : 'w-[82px] pl-[3px]',
            )}
          >
            <svg viewBox="0 0 24 24" className="size-6 shrink-0">{a.icon}</svg>
            {a.text}
          </button>
        ))}
      </div>
      <div className="flex items-center gap-2 pr-1">
        {TRAY.map((t) => (
          <button key={t.label} type="button" aria-label={t.label}>
            <svg viewBox="0 0 16 16" className="size-4">{t.icon}</svg>
          </button>
        ))}
        <button type="button" className="ml-6 h-10 border-r border-[#555] pr-1.5 text-xs">中</button>
      </div>
    </footer>
  );
}

export default function App() {
  return (
    <div className="flex h-screen w-full flex-col overflow-hidden bg-[#eeeeee] font-['Liberation_Sans','Noto_Sans_CJK_SC',sans-serif] text-black">
      <TitleBar />
      <MenuBar />
      <MainToolbar />
      <main className="flex min-h-0 flex-1">
        <Sidebar />
        <div className="flex w-[9px] shrink-0 flex-col items-center">
          <div className="flex-[240]" />
          <div className="w-1 flex-[100] border border-[#888] bg-white" />
          <div className="flex-[242]" />
        </div>
        <div className="flex min-w-0 flex-1 flex-col">
          <ViewTabs />
          <ActionBar />
          <BillTable />
          <div className="flex h-[7px] shrink-0 items-center justify-center">
            <div className="h-[5px] w-[100px] border border-[#888] bg-white" />
          </div>
          <DetailPane />
        </div>
      </main>
      <StatusBar />
      <Taskbar />
    </div>
  );
}
